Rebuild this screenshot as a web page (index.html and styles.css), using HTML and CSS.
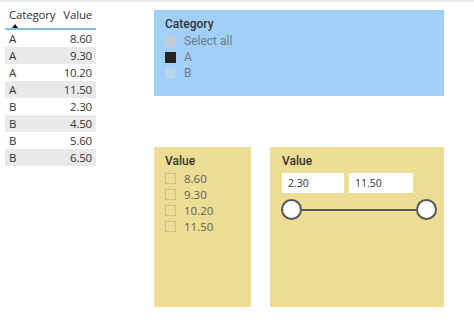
FILE: index.html
```html
<!DOCTYPE html>
<html>
<head>
    <title>Report page</title>
    <link rel="stylesheet" href="styles.css">
</head>
<body>

<div class="topbar"></div>

<div class="canvas">

    <!-- table visual -->
    <div class="grid">
        <div class="grid-head">
            <div class="cell cat">Category<span class="sort"></span></div>
            <div class="cell val">Value</div>
        </div>
        <div class="grid-row"><div class="cell cat">A</div><div class="cell val">8.60</div></div>
        <div class="grid-row alt"><div class="cell cat">A</div><div class="cell val">9.30</div></div>
        <div class="grid-row"><div class="cell cat">A</div><div class="cell val">10.20</div></div>
        <div class="grid-row alt"><div class="cell cat">A</div><div class="cell val">11.50</div></div>
        <div class="grid-row"><div class="cell cat">B</div><div class="cell val">2.30</div></div>
        <div class="grid-row alt"><div class="cell cat">B</div><div class="cell val">4.50</div></div>
        <div class="grid-row"><div class="cell cat">B</div><div class="cell val">5.60</div></div>
        <div class="grid-row alt"><div class="cell cat">B</div><div class="cell val">6.50</div></div>
    </div>

    <div class="visuals">

        <!-- category slicer -->
        <div class="slicer blue">
            <div class="slicer-title">Category</div>
            <div class="item"><span class="box partial"></span>Select all</div>
            <div class="item"><span class="box checked"></span>A</div>
            <div class="item"><span class="box empty"></span>B</div>
        </div>

        <div class="lower">
            <!-- value list slicer -->
            <div class="slicer yellow narrow">
                <div class="slicer-title">Value</div>
                <div class="item"><span class="box"></span>8.60</div>
                <div class="item"><span class="box"></span>9.30</div>
                <div class="item"><span class="box"></span>10.20</div>
                <div class="item"><span class="box"></span>11.50</div>
            </div>

            <!-- value range slicer -->
            <div class="slicer yellow wide">
                <div class="slicer-title">Value</div>
                <div class="inputs">
                    <div class="field">2.30</div>
                    <div class="field">11.50</div>
                </div>
                <div class="range">
                    <span class="handle"></span>
                    <span class="track"></span>
                    <span class="handle"></span>
                </div>
            </div>
        </div>

    </div>
</div>

</body>
</html>
```

FILE: styles.css
```css
BODY {
    margin: 0;
    background: #fff;
    font-family: "Open Sans", "Noto Sans", sans-serif;
    color: #252423;
}

.topbar {
    height: 2px;
    background: #ebe9e7;
}

.canvas {
    display: flex;
    align-items: flex-start;
}

/* table */
.grid {
    width: 91px;
    margin-left: 5px;
    margin-top: 4px;
    font-size: 11.5px;
    letter-spacing: -0.2px;
    color: #333;
}
.grid-head {
    display: flex;
    height: 22px;
    border-bottom: 2px solid #7fbde6;
}
.grid-row {
    display: flex;
    height: 17px;
    line-height: 17px;
}
.grid-row.alt {
    background: #eaeaea;
}
.cell.cat {
    flex: 1;
    padding-left: 4px;
    position: relative;
}
.cell.val {
    padding-right: 4px;
    text-align: right;
}
.grid-head .cell {
    line-height: 16px;
    padding-top: 1px;
}
.sort {
    position: absolute;
    left: 7px;
    top: 18px;
    width: 0;
    height: 0;
    border-left: 3px solid transparent;
    border-right: 3px solid transparent;
    border-bottom: 4px solid #111;
}

/* slicers */
.visuals {
    margin-left: 58px;
    margin-top: 8px;
    display: flex;
    flex-direction: column;
    gap: 51px;
}
.slicer {
    box-sizing: border-box;
    padding: 6px 10px 0 11px;
}
.blue {
    width: 290px;
    height: 86px;
    background: #a1d1fb;
}
.yellow {
    height: 160px;
    background: #eedd94;
}
.narrow {
    width: 97px;
}
.wide {
    width: 174px;
    padding-left: 12px;
}
.lower {
    display: flex;
    gap: 19px;
}
.slicer-title {
    font-family: Roboto, sans-serif;
    font-weight: 500;
    font-size: 12px;
    line-height: 16px;
    color: #333;
    margin-bottom: 1px;
}
.item {
    display: flex;
    align-items: center;
    height: 16px;
    font-size: 11.5px;
    color: #605e5c;
}
.blue .item {
    font-family: Roboto, sans-serif;
    font-size: 12px;
    color: #6e7a86;
}
.box {
    box-sizing: border-box;
    width: 11px;
    height: 11px;
    margin-right: 8px;
    border: 1px solid #c9bf97;
}
.box.partial {
    background: #c3ccd5;
    border-color: #c3ccd5;
}
.box.checked {
    background: #252423;
    border-color: #252423;
}
.box.empty {
    border-color: #c3ccd5;
    background: #b3d8f8;
}

/* range slicer */
.inputs {
    display: flex;
    gap: 5px;
    margin-top: 4px;
}
.field {
    width: 62px;
    height: 20px;
    line-height: 20px;
    background: #fff;
    font-size: 10.5px;
    padding-left: 6px;
    box-sizing: border-box;
    color: #333;
}
.inputs .field:last-child {
    width: 64px;
}
.range {
    display: flex;
    align-items: center;
    margin-top: 6px;
    margin-left: -1px;
    width: 156px;
}
.track {
    flex: 1;
    height: 2px;
    background: #555;
}
.handle {
    box-sizing: border-box;
    width: 21px;
    height: 21px;
    border-radius: 50%;
    border: 2px solid #555;
    background: #fff;
}
```
